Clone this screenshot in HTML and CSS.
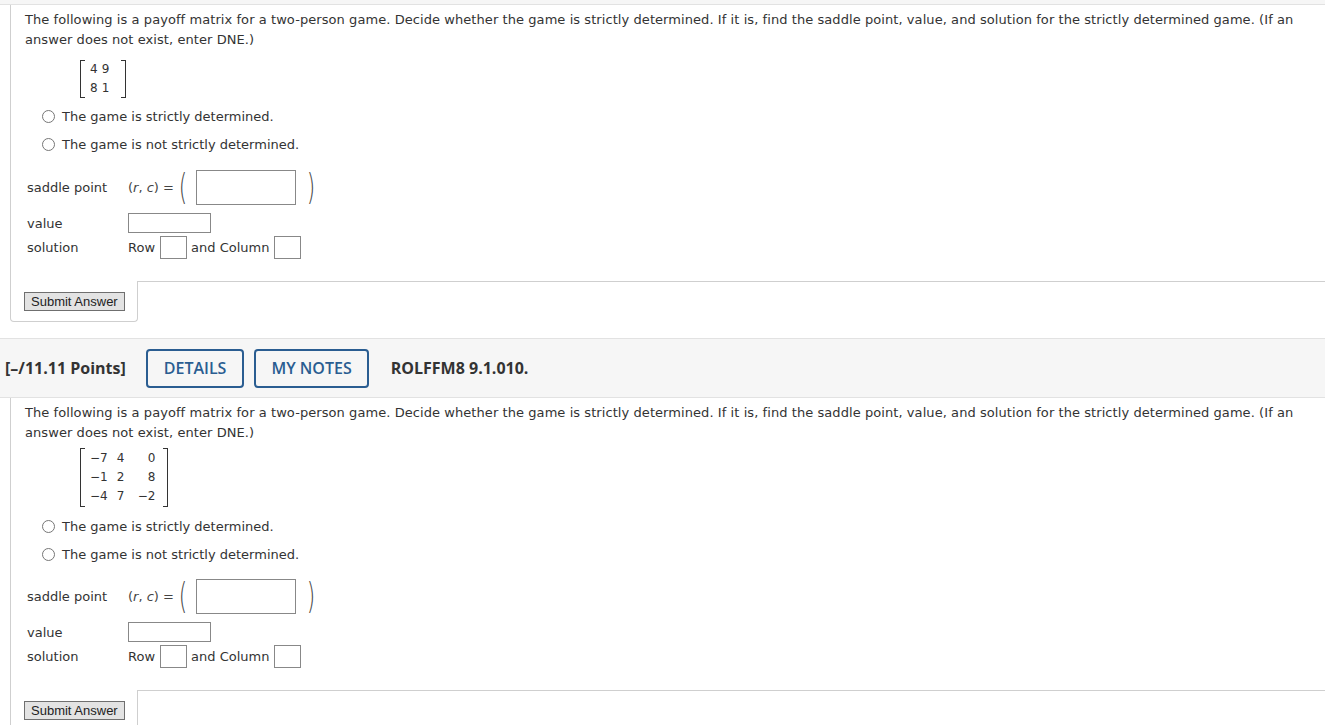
FILE: index.html
```html
<!DOCTYPE html>
<html>
<head>
<meta charset="utf-8">
<link rel="stylesheet" href="styles.css">
</head>
<body>
<div class="topstrip"></div>

<section class="question">
  <div class="qbody">
    <p class="prompt">The following is a payoff matrix for a two-person game. Decide whether the game is strictly determined. If it is, find the saddle point, value, and solution for the strictly determined game. (If an answer does not exist, enter DNE.)</p>
    <div class="matrix m2">
      <span class="br br-l"></span>
      <div class="cells c2">
        <span>4</span><span>9</span>
        <span>8</span><span>1</span>
      </div>
      <span class="br br-r"></span>
    </div>
    <div class="choices">
      <label class="choice"><span class="radio"></span>The game is strictly determined.</label>
      <label class="choice"><span class="radio"></span>The game is not strictly determined.</label>
    </div>
    <div class="answers">
      <div class="lbl row-saddle">saddle point</div>
      <div class="fld row-saddle"><span class="rc">(<i>r</i>, <i>c</i>) =</span><span class="paren">(</span><span class="inp big"></span><span class="paren">)</span></div>
      <div class="lbl row-value">value</div>
      <div class="fld row-value"><span class="inp mid"></span></div>
      <div class="lbl row-sol">solution</div>
      <div class="fld row-sol">Row<span class="inp small"></span>and Column<span class="inp small"></span></div>
    </div>
  </div>
  <div class="qfoot">
    <div class="submit-tab"><button class="submit">Submit Answer</button></div>
    <div class="foot-rest"></div>
  </div>
</section>

<header class="qheader">
  <span class="points">[–/11.11 Points]</span>
  <button class="hbtn hbtn-details">DETAILS</button>
  <button class="hbtn hbtn-notes">MY NOTES</button>
  <span class="code">ROLFFM8 9.1.010.</span>
</header>

<section class="question">
  <div class="qbody">
    <p class="prompt">The following is a payoff matrix for a two-person game. Decide whether the game is strictly determined. If it is, find the saddle point, value, and solution for the strictly determined game. (If an answer does not exist, enter DNE.)</p>
    <div class="matrix m3">
      <span class="br br-l"></span>
      <div class="cells c3">
        <span>−7</span><span>4</span><span>0</span>
        <span>−1</span><span>2</span><span>8</span>
        <span>−4</span><span>7</span><span>−2</span>
      </div>
      <span class="br br-r"></span>
    </div>
    <div class="choices choices-3">
      <label class="choice"><span class="radio"></span>The game is strictly determined.</label>
      <label class="choice"><span class="radio"></span>The game is not strictly determined.</label>
    </div>
    <div class="answers answers-3">
      <div class="lbl row-saddle">saddle point</div>
      <div class="fld row-saddle"><span class="rc">(<i>r</i>, <i>c</i>) =</span><span class="paren">(</span><span class="inp big"></span><span class="paren">)</span></div>
      <div class="lbl row-value">value</div>
      <div class="fld row-value"><span class="inp mid"></span></div>
      <div class="lbl row-sol">solution</div>
      <div class="fld row-sol">Row<span class="inp small"></span>and Column<span class="inp small"></span></div>
    </div>
  </div>
  <div class="qfoot">
    <div class="submit-tab"><button class="submit">Submit Answer</button></div>
    <div class="foot-rest"></div>
  </div>
</section>
</body>
</html>
```

FILE: styles.css
```css
html, body {
  margin: 0;
  padding: 0;
  background: #fff;
}
body {
  font-family: "DejaVu Sans", Verdana, sans-serif;
  font-size: 13px;
  color: #333;
  overflow: hidden;
}
.topstrip {
  height: 4px;
  background: #f6f6f6;
  border-bottom: 1px solid #e2e2e2;
}
.question {
  margin-left: 10px;
}
.qbody {
  border-left: 1px solid #cfcfcf;
  padding: 5px 20px 21px 14px;
}
.prompt {
  margin: 0;
  line-height: 20px;
  letter-spacing: 0.07px;
}
.matrix {
  display: inline-flex;
  margin: 10px 0 0 55px;
  font-size: 12px;
  color: #333;
}
.m3 { margin-top: 5px; }
.br {
  width: 4px;
  border: 1px solid #333;
}
.br-l { border-right: none; }
.br-r { border-left: none; }
.cells {
  display: grid;
  line-height: 19px;
  padding: 0;
}
.cells span { text-align: right; }
.c2 {
  grid-template-columns: auto auto;
  column-gap: 4px;
  padding: 0 12px 0 5px;
}
.c3 {
  grid-template-columns: auto auto 22px;
  column-gap: 9px;
  padding: 1px 8px 1px 5px;
}
.choices {
  margin-top: 1px;
  margin-left: 17px;
}
.choices-3 { margin-top: 2px; }
.choice {
  display: flex;
  align-items: center;
  height: 28px;
}
.radio {
  width: 11px;
  height: 11px;
  border: 1px solid #767676;
  border-radius: 50%;
  background: #fff;
  margin-right: 7px;
}
.answers {
  display: grid;
  grid-template-columns: 101px auto;
  margin: 11px 0 0 2px;
}
.answers.answers-3 { margin-top: 10px; }
.lbl, .fld {
  display: flex;
  align-items: center;
}
.row-saddle { height: 36px; }
.row-value { height: 22px; margin-top: 7px; }
.row-sol { height: 26px; }
.rc {
  color: #444;
  font-size: 13px;
}
.rc i { font-style: italic; }
.paren {
  font-family: "DejaVu Sans", sans-serif;
  font-weight: 200;
  font-size: 36px;
  line-height: 36px;
  transform: scaleX(0.6);
  color: #444;
  margin: 0 2px;
}
.inp {
  display: inline-block;
  border: 1px solid #888;
  background: #fff;
  box-sizing: border-box;
}
.big { width: 100px; height: 35px; margin: 0 6px 0 4px; }
.mid { width: 83px; height: 20px; }
.small { width: 27px; height: 23px; margin: 0 4px 0 5px; }
.qfoot {
  display: flex;
}
.submit-tab {
  width: 113px;
  border: 1px solid #cfcfcf;
  border-top: none;
  border-radius: 0 0 4px 4px;
  padding: 11px 0 10px 13px;
}
.submit {
  display: block;
  font-family: "Liberation Sans", Arial, sans-serif;
  font-size: 13px;
  color: #222;
  background: #e3e3e3;
  border: 1px solid #6f6f6f;
  padding: 0 6px;
  height: 19px;
  line-height: 17px;
  white-space: nowrap;
}
.foot-rest {
  flex: 1;
  border-top: 1px solid #cfcfcf;
}
.qheader {
  margin-top: 16px;
  height: 58px;
  background: #f6f6f6;
  border-top: 1px solid #e2e2e2;
  border-bottom: 1px solid #e2e2e2;
  display: flex;
  align-items: center;
  padding-left: 5px;
  font-family: "Open Sans", sans-serif;
  font-weight: 700;
  font-size: 16px;
  color: #333;
}
.points { margin-right: 20px; }
.hbtn {
  font-family: "Open Sans", sans-serif;
  font-weight: 600;
  font-size: 16px;
  color: #2a5d91;
  background: transparent;
  border: 2px solid #2a5d91;
  border-radius: 4px;
  height: 39px;
  padding: 0 15px;
}
.hbtn-details { padding: 0 16px; margin-right: 10px; }
.hbtn-notes { margin-right: 22px; }
```
